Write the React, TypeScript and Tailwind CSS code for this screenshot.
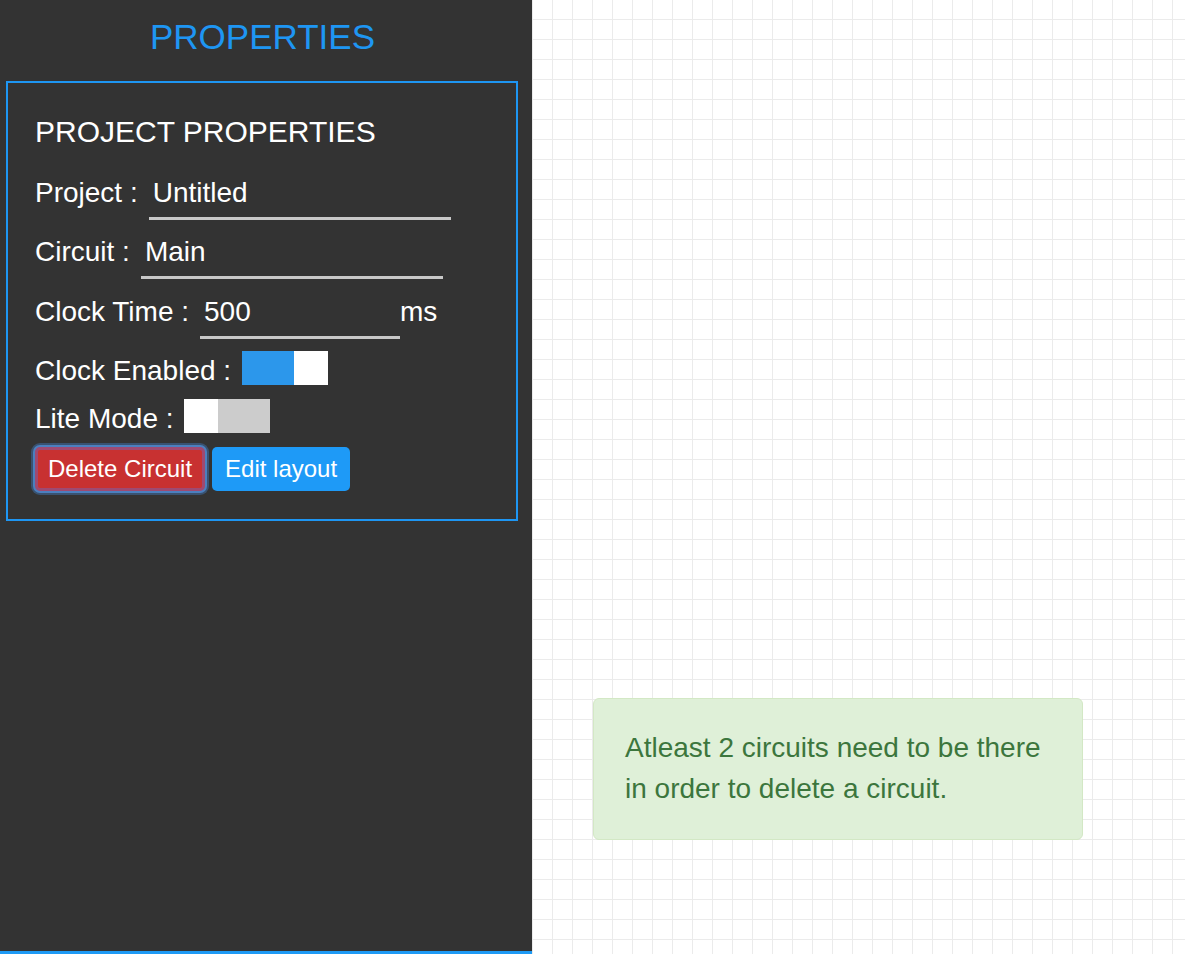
import { useState } from 'react';

function Toggle({ on, onChange }: { on: boolean; onChange: () => void }) {
  return (
    <button
      onClick={onChange}
      className={`flex w-[86px] h-[34px] ${on ? 'bg-[#2c97eb]' : 'bg-[#cccccc]'}`}
    >
      {on ? (
        <>
          <div className="flex-1" />
          <div className="w-[34px] h-[34px] bg-white" />
        </>
      ) : (
        <>
          <div className="w-[34px] h-[34px] bg-white" />
          <div className="flex-1" />
        </>
      )}
    </button>
  );
}

function Field({
  label,
  value,
  width,
  onChange,
  suffix,
}: {
  label: string;
  value: string;
  width: string;
  onChange: (v: string) => void;
  suffix?: string;
}) {
  return (
    <div className="flex items-baseline">
      <span className="leading-[32px] mr-[11px]">{label}</span>
      <input
        value={value}
        onChange={(e) => onChange(e.target.value)}
        className={`${width} h-[43px] pb-2 pl-[4px] leading-[32px] bg-transparent text-white border-0 border-b-[3px] border-[#c8c8c8] outline-none`}
      />
      {suffix && <span className="leading-[32px]">{suffix}</span>}
    </div>
  );
}

export default function App() {
  const [project, setProject] = useState('Untitled');
  const [circuit, setCircuit] = useState('Main');
  const [clockTime, setClockTime] = useState('500');
  const [clockEnabled, setClockEnabled] = useState(true);
  const [liteMode, setLiteMode] = useState(false);

  return (
    <div className="flex h-[954px] w-full font-['Liberation_Sans',Arial,sans-serif] overflow-hidden">
      {/* Sidebar */}
      <div className="w-[532px] shrink-0 h-full bg-[#333333] border-b-[3px] border-[#1e9af5] text-white">
        <div className="pt-[17px] pr-[7px] text-center text-[35px] leading-[40px] text-[#1e96f3]">
          PROPERTIES
        </div>

        <div className="ml-[6px] mt-[24px] w-[512px] h-[440px] border-2 border-[#1e96f3] pl-[27px] pt-[32px] text-[28px]">
          <div className="text-[30px] leading-[34px]">PROJECT PROPERTIES</div>

          <div className="mt-[28px]">
            <Field label="Project :" value={project} width="w-[302px]" onChange={setProject} />
          </div>
          <div className="mt-[16px]">
            <Field label="Circuit :" value={circuit} width="w-[302px]" onChange={setCircuit} />
          </div>
          <div className="mt-[17px]">
            <Field label="Clock Time :" value={clockTime} width="w-[200px]" onChange={setClockTime} suffix="ms" />
          </div>

          <div className="mt-[12px] h-[34px] flex items-start">
            <span className="mt-[4px] leading-[32px] mr-[11px]">Clock Enabled :</span>
            <Toggle on={clockEnabled} onChange={() => setClockEnabled(!clockEnabled)} />
          </div>
          <div className="mt-[14px] h-[34px] flex items-start">
            <span className="mt-[4px] leading-[32px] mr-[10px]">Lite Mode :</span>
            <Toggle on={liteMode} onChange={() => setLiteMode(!liteMode)} />
          </div>

          <div className="mt-[14px] flex gap-[7px]">
            <button className="h-[44px] px-[10px] text-[24px] leading-none rounded-[5px] bg-[#c83131] text-white border-[3px] border-[#9e4a72] shadow-[0_0_0_2px_#4b7fbf,0_0_0_4px_rgba(60,95,140,0.7)]">
              Delete Circuit
            </button>
            <button className="h-[44px] px-[13px] text-[24px] leading-none rounded-[5px] bg-[#1e9af7] text-white">
              Edit layout
            </button>
          </div>
        </div>
      </div>

      {/* Canvas */}
      <div className="relative flex-1 h-full bg-white bg-[linear-gradient(to_right,#ebebeb_1px,transparent_1px),linear-gradient(to_bottom,transparent_19px,#ebebeb_19px)] bg-[size:20px_20px]">
        <div className="absolute left-[61px] top-[698px] w-[490px] rounded-[6px] border border-[#d3e8c5] bg-[#dff0d8] text-[#3c763d] text-[28px] leading-[41px] pt-[28px] pb-[30px] px-[31px]">
          Atleast 2 circuits need to be there in order to delete a circuit.
        </div>
      </div>
    </div>
  );
}
